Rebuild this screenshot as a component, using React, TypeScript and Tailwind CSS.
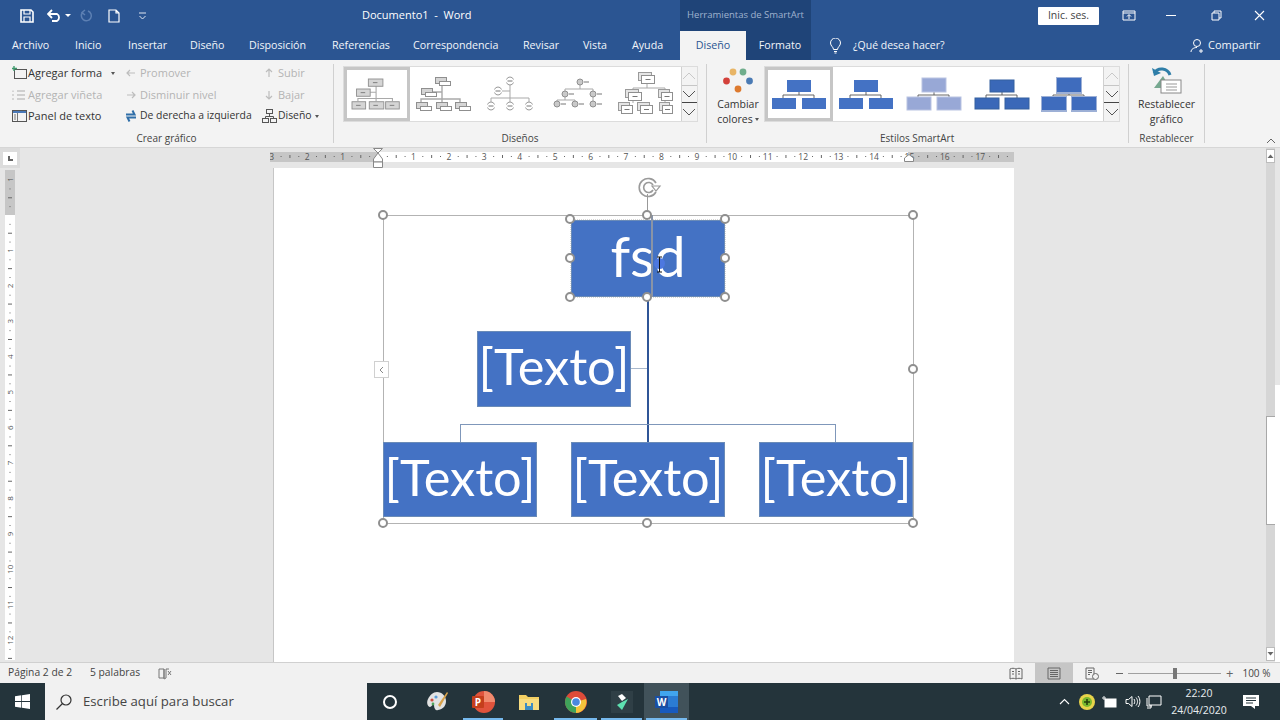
import React from "react";

const F = "font-['Open_Sans','Noto_Sans',sans-serif]";

function Tab({ w, children, cls = "" }: { w: number; children: React.ReactNode; cls?: string }) {
  return <div style={{ width: w }} className={"h-full flex items-center shrink-0 " + cls}>{children}</div>;
}

function Row({ icon, label, dim, w, caret, gap, small }: { icon: React.ReactNode; label: string; dim?: boolean; w: number; caret?: boolean; gap?: boolean; small?: boolean }) {
  return (
    <div style={{ width: w }} className={"h-[21.5px] flex items-center whitespace-nowrap " + (small ? "text-[10.4px] " : "text-[11px] ") + (dim ? "text-[#b4b4b4]" : "text-[#333]")}>
      <span className="w-[18px] h-[16px] flex items-center justify-center shrink-0">{icon}</span>
      <span>{label}</span>
      {caret && <span className={(gap ? "ml-[9px]" : "ml-[3px]") + " w-0 h-0 border-x-[2.5px] border-x-transparent border-t-[3px] border-t-[#555]"} />}
    </div>
  );
}

const G = "#a9a9a9";
function B({ x, y, w, h, fill = "#d5d5d5", s = "#8f8f8f" }: { x: number; y: number; w: number; h: number; fill?: string; s?: string }) {
  return <rect x={x + 0.5} y={y + 0.5} width={w} height={h} fill={fill} stroke={s} strokeWidth="1" />;
}
function dash(x: number, y: number) {
  return <line x1={x} y1={y} x2={x + 5} y2={y} stroke="#777" strokeWidth="1" />;
}

function L1() {
  return (
    <svg width="66" height="50" viewBox="0 0 66 50">
      <path d="M32 16V33M12 33V30H50V33M25 23H32" stroke={G} strokeWidth="1.2" fill="none" />
      <B x={23} y={8} w={16} h={8} />{dash(28.5, 12.5)}
      <B x={10} y={19} w={15} h={8} />{dash(15, 23.5)}
      <B x={5} y={33} w={15} h={8} />{dash(10, 37.5)}
      <B x={24} y={33} w={16} h={8} />{dash(29, 37.5)}
      <B x={42} y={33} w={15} h={8} />{dash(47, 37.5)}
    </svg>
  );
}
function L2() {
  return (
    <svg width="66" height="50" viewBox="0 0 66 50">
      <path d="M32 14V33M11 33V30H50V33M22 23H32" stroke={G} strokeWidth="1.4" fill="none" />
      {[[25, 8], [11, 19], [6, 33], [26, 33], [45, 33]].map(([x, y], i) => (
        <g key={i}>
          <B x={x} y={y} w={11} h={6} />
          <rect x={x + 4.5} y={y + 4.5} width={11} height={4} fill="#fff" stroke="#8f8f8f" />
        </g>
      ))}
    </svg>
  );
}
function Ring({ x, y }: { x: number; y: number }) {
  return <g><path d={`M${x - 3.5} ${y - 1.5}a3.7 3.7 0 0 1 7 0M${x - 3.5} ${y + 1.5}a3.7 3.7 0 0 0 7 0`} fill="none" stroke="#999" strokeWidth="1" />{dash(x - 2.5, y)}</g>;
}
function L3() {
  return (
    <svg width="66" height="50" viewBox="0 0 66 50">
      <path d="M32 16V33M13 33V29H51V33M24 22H32" stroke={G} strokeWidth="1" fill="none" />
      <Ring x={32} y={12} /><Ring x={20} y={22} /><Ring x={13} y={37} /><Ring x={32} y={37} /><Ring x={51} y={37} />
    </svg>
  );
}
function Dot({ x, y }: { x: number; y: number }) {
  return <g><circle cx={x} cy={y} r="3" fill="#c9c9c9" stroke="#8f8f8f" />{dash(x + 4, y)}</g>;
}
function L4() {
  return (
    <svg width="66" height="50" viewBox="0 0 66 50">
      <path d="M34 16V20M19 22V20H47V22M19 28V31H11V32M19 31H29V32M47 28V32" stroke={G} strokeWidth="1" fill="none" />
      <Dot x={34} y={13} /><Dot x={19} y={25} /><Dot x={47} y={25} /><Dot x={11} y={35} /><Dot x={29} y={35} /><Dot x={47} y={35} />
    </svg>
  );
}
function Stack({ x, y, w = 13, h = 8 }: { x: number; y: number; w?: number; h?: number }) {
  return <g>
    <rect x={x - 2.5} y={y - 2.5} width={w} height={h} fill="#e5e5e5" stroke="#9a9a9a" />
    <rect x={x + 0.5} y={y + 0.5} width={w} height={h} fill="#fff" stroke="#8f8f8f" />{dash(x + w / 2 - 2, y + 4.5)}
  </g>;
}
function L5() {
  return (
    <svg width="66" height="50" viewBox="0 0 66 50" className="overflow-visible">
      <path d="M34 15V19M20 21V19H52V21M20 31V34M52 31V34" stroke={G} fill="none" />
      <Stack x={28} y={6} w={13} /><Stack x={15} y={23} w={13} /><Stack x={48} y={23} w={11} />
      <Stack x={8} y={36} w={11} /><Stack x={27} y={36} w={12} /><Stack x={49} y={36} w={10} />
    </svg>
  );
}

function Thumb({ kind }: { kind: number }) {
  const fills = ["#4472c4", "#4472c4", "#98a8d6", "#3a68b8", "#3f6cbd"];
  const f = fills[kind];
  const shadow = kind === 4;
  const st = kind === 2 ? "#b9c3e2" : kind === 3 ? "#34619f" : "none";
  const r = (x: number, y: number, w: number, h: number) => (
    <g>
      {shadow && <rect x={x - 1} y={y - 1} width={w + 2} height={h + 3} fill="#9db0d6" />}
      <rect x={x} y={y} width={w} height={h} fill={f} stroke={st} />
    </g>
  );
  const tall = kind === 2 || kind === 4;
  return (
    <svg width="60" height="44" viewBox="0 0 60 44">
      <path d="M30 20V23M14 26V23H45V26" stroke="#555" strokeWidth="0.9" fill="none" />
      {r(18, tall ? 6 : 8, 24, tall ? 14 : 12)}
      {r(3, tall ? 25 : 26, 24, tall ? 13 : 11)}
      {r(33, tall ? 25 : 26, 24, tall ? 13 : 11)}
    </svg>
  );
}

function Chev({ d }: { d: "u" | "d" }) {
  return (
    <svg width="14" height="8" viewBox="0 0 14 8">
      <path d={d === "u" ? "M1 7L7 1L13 7" : "M1 1L7 7L13 1"} stroke={d === "u" ? "#c8c8c8" : "#555"} fill="none" />
    </svg>
  );
}

function Gallery({ w, children }: { w: number; children: React.ReactNode }) {
  return (
    <div style={{ width: w }} className="h-[56px] border border-[#dcdcdc] bg-white flex shrink-0">
      <div className="flex-1 flex min-w-0">{children}</div>
      <div className="w-[16px] border-l border-[#d0d0d0] bg-[#f3f3f3] flex flex-col shrink-0">
        <div className="h-[19px] flex items-center justify-center border-b border-[#c6c6c6]"><Chev d="u" /></div>
        <div className="h-[17px] flex items-center justify-center border-b border-[#444]"><Chev d="d" /></div>
        <div className="flex-1 flex items-center justify-center"><Chev d="d" /></div>
      </div>
    </div>
  );
}
function Cell({ w, sel, children }: { w: number; sel?: boolean; children: React.ReactNode }) {
  return <div style={{ width: w }} className={"h-full flex items-center justify-center shrink-0 " + (sel ? "border-[3px] border-[#c6c6c6]" : "")}>{children}</div>;
}

function Handle({ x, y }: { x: number; y: number }) {
  return <div style={{ left: x - 5 - 274, top: y - 5 - 168 }} className="absolute w-[10px] h-[10px] rounded-full bg-white border-2 border-[#8f8f8f]" />;
}
function SBox({ x, y, w, h, text, big }: { x: number; y: number; w: number; h: number; text: string; big?: boolean }) {
  return (
    <div style={{ left: x - 274, top: y - 168, width: w, height: h }} className={"absolute bg-[#4472c4] border border-[#6a8bb8] flex items-center justify-center text-white leading-none font-['Lato',sans-serif] " + (big ? "text-[56px] pb-[6px]" : "text-[50.5px] pb-[5px]")}>
      {text}
    </div>
  );
}

function HRuler() {
  const nums: React.ReactNode[] = [];
  const tick = 35.43;
  for (let i = -3; i <= 18; i++) {
    const x = 108 + i * tick;
    if (i !== 0 && i !== 18) nums.push(<text key={i} x={x} y={8} fontSize="8.5" textAnchor="middle" fill="#555" fontFamily="Open Sans">{Math.abs(i)}</text>);
    [0.25, 0.75].forEach((k, j) => nums.push(<rect key={`d${i}${j}`} x={x + k * tick} y={4} width="1" height="1" fill="#666" />));
    nums.push(<rect key={`m${i}`} x={x + 0.5 * tick} y={3} width="1" height="3" fill="#666" />);
  }
  return (
    <svg width="744" height="10" viewBox="0 0 744 10">
      <rect width="108" height="10" fill="#c6c6c6" />
      <rect x="108" width="530" height="10" fill="#fff" />
      <rect x="638" width="106" height="10" fill="#c6c6c6" />
      {nums}
    </svg>
  );
}
function VRuler() {
  const nums: React.ReactNode[] = [];
  const tick = 35.43;
  for (let i = -1; i <= 13; i++) {
    const y = 45 + i * tick;
    if (i !== 0 && i !== 13) nums.push(<text key={i} x={5} y={y} fontSize="8" textAnchor="middle" fill="#555" fontFamily="Open Sans" transform={`rotate(-90 5 ${y}) translate(0 3)`}>{Math.abs(i)}</text>);
    [0.25, 0.75].forEach((k, j) => nums.push(<rect key={`d${i}${j}`} x={4.5} y={y + k * tick} width="1" height="1" fill="#666" />));
    nums.push(<rect key={`m${i}`} x={3} y={y + 0.5 * tick} width="4" height="1" fill="#666" />);
  }
  return (
    <svg width="10" height="490" viewBox="0 0 10 490" className="mt-[2px]">
      <rect width="10" height="45" fill="#c6c6c6" />
      <rect y="45" width="10" height="445" fill="#fff" />
      {nums}
    </svg>
  );
}

function TI({ w, active, under, children }: { w: number; active?: boolean; under?: boolean; children: React.ReactNode }) {
  return (
    <div style={{ width: w }} className={"h-full relative flex items-center justify-center shrink-0 " + (active ? "bg-[#41525a]" : "")}>
      {children}
      {under && <div className="absolute bottom-0 left-[2px] right-[2px] h-[2px] bg-[#76b9ed]" />}
    </div>
  );
}

const GroupLabel = "h-[17px] -mb-[4px] text-[10px] leading-[17px] text-[#444]";

export default function App() {
  return (
    <div className={"w-[1280px] h-[720px] overflow-hidden flex flex-col bg-[#e6e6e6] " + F}>
      {/* Title bar */}
      <div className="h-[31px] bg-[#2b5592] flex items-center text-white shrink-0 relative">
        <div className="w-[362px] flex items-center shrink-0">
          <svg className="ml-[20px]" width="14" height="14" viewBox="0 0 14 14" fill="none" stroke="#fff" strokeWidth="1.6"><path d="M1 1H11L13 3V13H1Z" /><path d="M4 1V5H10V1M4 13V8H10V13" strokeWidth="1.2" /></svg>
          <svg className="ml-[13px]" width="16" height="14" viewBox="0 0 16 14" fill="none" stroke="#fff" strokeWidth="1.8"><path d="M1 5H10A4 4 0 0 1 10 12H5M5 1L1 5L5 9" /></svg>
          <span className="ml-[2px] w-0 h-0 border-x-[3px] border-x-transparent border-t-[3px] border-t-white" />
          <svg className="ml-[8px]" width="14" height="14" viewBox="0 0 14 14" fill="none" stroke="#5d80b3" strokeWidth="1.5"><path d="M4 3A5 5 0 1 0 9 2M6 1L3 3.5L6 6" /></svg>
          <svg className="ml-[15px]" width="12" height="14" viewBox="0 0 12 14" fill="none" stroke="#fff" strokeWidth="1.2"><path d="M1 1H8L11 4V13H1ZM8 1V4H11" /></svg>
          <svg className="ml-[18px]" width="9" height="8" viewBox="0 0 9 8" fill="none" stroke="#dfe6f0" strokeWidth="1"><path d="M1 1H8M1.5 4L4.5 7L7.5 4" /></svg>
        </div>
        <div className="w-[318px] text-[11px] shrink-0 whitespace-pre">Documento1  -  Word</div>
        <div className="w-[131px] h-full bg-[#1f4478] text-[#9fb3cf] text-[9.5px] flex items-center justify-center shrink-0 whitespace-nowrap">Herramientas de SmartArt</div>
        <div className="ml-[227px] w-[61px] h-[18px] bg-white rounded-[1px] text-[#444] text-[10.5px] flex items-center justify-center shrink-0">Inic. ses.</div>
        <svg className="ml-[23px]" width="14" height="11" viewBox="0 0 14 11" fill="none" stroke="#fff"><path d="M1 1H13V10H1ZM1 3H13M7 9V5M5 6.5L7 4.5L9 6.5" /></svg>
        <div className="ml-[30px] w-[10px] h-px bg-white" />
        <svg className="ml-[35px]" width="11" height="11" viewBox="0 0 11 11" fill="none" stroke="#fff"><path d="M1 3H8V10H1ZM3 3V1H10V8H8" /></svg>
        <svg className="ml-[32px]" width="11" height="11" viewBox="0 0 11 11" fill="none" stroke="#fff" strokeWidth="1.1"><path d="M1 1L10 10M10 1L1 10" /></svg>
      </div>

      {/* Tabs */}
      <div className="h-[29px] bg-[#2b5592] flex items-center text-[#f2f5fa] text-[10.7px] shrink-0">
        <Tab w={75} cls="pl-[12px]">Archivo</Tab>
        <Tab w={53}>Inicio</Tab>
        <Tab w={62}>Insertar</Tab>
        <Tab w={59}>Diseño</Tab>
        <Tab w={83}>Disposición</Tab>
        <Tab w={81}>Referencias</Tab>
        <Tab w={110}>Correspondencia</Tab>
        <Tab w={60}>Revisar</Tab>
        <Tab w={49}>Vista</Tab>
        <Tab w={48}>Ayuda</Tab>
        <Tab w={66} cls="bg-[#f3f3f3] text-[#2b5592] justify-center">Diseño</Tab>
        <Tab w={65} cls="bg-[#1f4478] justify-center pl-[3px]">Formato</Tab>
        <svg className="ml-[18px]" width="13" height="16" viewBox="0 0 13 16" fill="none" stroke="#fff"><path d="M4.5 11.5C4.5 9 1.5 8 1.5 5A5 5 0 0 1 11.5 5C11.5 8 8.5 9 8.5 11.5ZM5 13.5H8M5.5 15H7.5" /></svg>
        <span className="ml-[11px] text-[10.5px] w-[337px]">¿Qué desea hacer?</span>
        <svg width="16" height="16" viewBox="0 0 16 16" fill="none" stroke="#fff" strokeWidth="1"><circle cx="7" cy="5" r="3.5" /><path d="M1 14C1 11 4 9.5 7 9.5M11 11V15M9 13H13" /></svg>
        <span className="ml-[2px] text-[11px]">Compartir</span>
      </div>

      {/* Ribbon */}
      <div className="h-[88px] bg-[#f3f3f3] border-b border-[#d6d6d6] flex shrink-0 text-[#444]">
        {/* Crear gráfico */}
        <div className="w-[334px] shrink-0 flex flex-col items-stretch border-r border-[#d0d0d0] my-[4px]">
          <div className="flex pl-[10px] flex-1 min-h-0">
            <div className="flex flex-col w-[112px] -mt-[1.5px]">
              <Row w={112} label="Agregar forma" caret gap icon={<svg width="16" height="14" viewBox="0 0 16 14" fill="none"><rect x="3.5" y="3.5" width="12" height="9" stroke="#555" /><path d="M3 0V5M1 2.5H6" stroke="#3f9a6d" strokeWidth="1.4" /></svg>} />
              <Row w={112} dim label="Agregar viñeta" icon={<svg width="14" height="12" viewBox="0 0 14 12" fill="none" stroke="#c4c4c4" strokeWidth="1.3"><path d="M5 2H13M5 6H13M5 10H13M1 1.5V3M1 5V7M1 9V11" /></svg>} />
              <Row w={112} label="Panel de texto" icon={<svg width="15" height="12" viewBox="0 0 15 12" fill="none"><rect x=".5" y=".5" width="14" height="11" stroke="#555" /><rect x="1" y="1" width="13" height="2" fill="#4a79b8" /><path d="M5.5 3V11M2 5H4M2 7H4M2 9H4" stroke="#777" /></svg>} />
            </div>
            <div className="flex flex-col w-[138px] -mt-[1.5px]">
              <Row w={138} dim label="Promover" icon={<svg width="10" height="8" viewBox="0 0 10 8" fill="none" stroke="#bdbdbd" strokeWidth="1.2"><path d="M9 4H1M4 1L1 4L4 7" /></svg>} />
              <Row w={138} dim label="Disminuir nivel" icon={<svg width="10" height="8" viewBox="0 0 10 8" fill="none" stroke="#bdbdbd" strokeWidth="1.2"><path d="M1 4H9M6 1L9 4L6 7" /></svg>} />
              <Row w={138} small label="De derecha a izquierda" icon={<svg width="14" height="14" viewBox="0 0 14 14" fill="none" stroke="#2f6ea8" strokeWidth="2"><path d="M2 5.5H10.5L8.5 1.5M12 8.5H3.5L5.5 12.5" /></svg>} />
            </div>
            <div className="flex flex-col w-[68px] -mt-[1.5px]">
              <Row w={68} dim label="Subir" icon={<svg width="8" height="10" viewBox="0 0 8 10" fill="none" stroke="#bdbdbd" strokeWidth="1.2"><path d="M4 9V1M1 4L4 1L7 4" /></svg>} />
              <Row w={68} dim label="Bajar" icon={<svg width="8" height="10" viewBox="0 0 8 10" fill="none" stroke="#bdbdbd" strokeWidth="1.2"><path d="M4 1V9M1 6L4 9L7 6" /></svg>} />
              <Row w={68} small label="Diseño" caret icon={<svg width="15" height="14" viewBox="0 0 15 14" fill="none" stroke="#555"><rect x="4.5" y=".5" width="6" height="4" /><rect x=".5" y="9.5" width="6" height="4" /><rect x="8.5" y="9.5" width="6" height="4" /><path d="M7.5 5V7.5M3.5 9.5V7.5H11.5V9.5" /></svg>} />
            </div>
          </div>
          <div className={GroupLabel + " text-center"}>Crear gráfico</div>
        </div>
        {/* Diseños */}
        <div className="w-[373px] shrink-0 flex flex-col items-center border-r border-[#d0d0d0] my-[4px]">
          <div className="flex-1 pt-[2px]">
            <Gallery w={355}>
              <Cell w={66} sel><L1 /></Cell>
              <Cell w={66}><L2 /></Cell>
              <Cell w={70}><L3 /></Cell>
              <Cell w={66}><L4 /></Cell>
              <Cell w={69}><L5 /></Cell>
            </Gallery>
          </div>
          <div className={GroupLabel}>Diseños</div>
        </div>
        {/* Estilos */}
        <div className="w-[422px] shrink-0 flex flex-col border-r border-[#d0d0d0] my-[4px]">
          <div className="flex-1 flex pt-[2px]">
            <div className="w-[57px] shrink-0 flex flex-col items-center pl-[5px]">
              <svg width="30" height="28" viewBox="0 0 30 28" className="mt-[1px]">
                <circle cx="10" cy="5" r="3.4" fill="#e8b566" /><circle cx="20" cy="5" r="3.4" fill="#70ad8c" />
                <circle cx="3.5" cy="14" r="3.4" fill="#d3413a" /><circle cx="26.5" cy="14" r="3.4" fill="#4a7ab4" /><circle cx="15" cy="22" r="3.4" fill="#dd7a2f" />
              </svg>
              <div className="text-[10.5px] leading-[15px] text-center mt-[2px] text-[#333]">Cambiar</div>
              <div className="text-[10.5px] leading-[15px] text-center flex items-center text-[#333]">colores<span className="ml-[2px] w-0 h-0 border-x-[2.5px] border-x-transparent border-t-[3px] border-t-[#555]" /></div>
            </div>
            <Gallery w={356}>
              {[0, 1, 2, 3, 4].map((k) => (
                <Cell key={k} w={67.6} sel={k === 0}><Thumb kind={k} /></Cell>
              ))}
            </Gallery>
          </div>
          <div className={GroupLabel + " pl-[173px]"}>Estilos SmartArt</div>
        </div>
        {/* Restablecer */}
        <div className="w-[76px] shrink-0 flex flex-col items-center border-r border-[#d0d0d0] my-[4px]">
          <div className="flex-1 flex flex-col items-center pt-[2px]">
            <svg width="32" height="28" viewBox="0 0 32 28" fill="none">
              <path d="M3 7A9 9 0 0 1 19 9" stroke="#2f7ea8" strokeWidth="3" /><path d="M1 2L3 10L10 7Z" fill="#2f7ea8" />
              <path d="M3 22L12 10L19 22Z" fill="#76a890" />
              <rect x="10" y="14" width="20" height="13" fill="#fff" stroke="#888" />
              <path d="M15 18H26M15 21H26M15 24H26" stroke="#999" />
            </svg>
            <div className="text-[10.5px] leading-[15px] mt-[3px] text-[#333]">Restablecer</div>
            <div className="text-[10.5px] leading-[15px] text-[#333]">gráfico</div>
          </div>
          <div className={GroupLabel}>Restablecer</div>
        </div>
        <div className="flex-1 flex items-end justify-end pr-[2px] pb-[3px]">
          <svg width="12" height="6" viewBox="0 0 12 6" fill="none" stroke="#666"><path d="M1 5L5 1L9 5" /></svg>
        </div>
      </div>

      {/* Main */}
      <div className="flex-1 min-h-0 flex bg-[#e6e6e6]">
        {/* Left rulers */}
        <div className="w-[270px] shrink-0 flex flex-col">
          <div className="w-[20px] h-[20px] flex items-center justify-center bg-[#dcdcdc]">
            <div className="w-[14px] h-[13px] bg-white flex items-center justify-center">
              <div className="w-[5px] h-[5px] border-l-2 border-b-2 border-[#666]" />
            </div>
          </div>
          <div className="pl-[5px]"><VRuler /></div>
        </div>
        <div className="w-[744px] shrink-0 flex flex-col">
          <div className="h-[20px] pt-[4px] relative">
            <HRuler />
            <svg className="absolute left-[103px] top-0" width="10" height="20" viewBox="0 0 10 20" fill="#fff" stroke="#888"><path d="M.5 .5H9.5L5 5L9.5 11V14H.5V11L5 5Z" /><path d="M.5 14H9.5V19.5H.5Z" /></svg>
            <svg className="absolute left-[634px] top-[6px]" width="10" height="8" viewBox="0 0 10 8" fill="#fff" stroke="#888"><path d="M.5 7.5V4L5 .5L9.5 4V7.5Z" /></svg>
          </div>
          {/* Page */}
          <div className="flex-1 ml-[3px] bg-white border-l border-[#c6c6c6] relative">
            <Diagram />
          </div>
        </div>
        <div className="flex-1" />
        {/* Scrollbar */}
        <div className="w-[9px] shrink-0 bg-[#d6d6d6] flex flex-col mb-[1px]">
          <div className="h-[14px] mt-[1px] bg-white border border-[#bcbcbc] flex items-center justify-center"><svg width="7" height="4" viewBox="0 0 7 4"><path d="M.5 4L3.5 .5L6.5 4Z" fill="#666" /></svg></div>
          <div className="mt-[253px] h-[109px] bg-white border-l border-y border-[#a8a8a8]" />
          <div className="flex-1" />
          <div className="h-[14px] bg-white border border-[#bcbcbc] flex items-center justify-center"><svg width="7" height="4" viewBox="0 0 7 4"><path d="M.5 0L3.5 3.5L6.5 0Z" fill="#666" /></svg></div>
        </div>
        <div className="w-[5px] shrink-0 flex flex-col">
          <div className="h-[237px] bg-[#e6e6e6]" />
          <div className="flex-1 bg-white" />
        </div>
      </div>

      {/* Status bar */}
      <div className="h-[21px] bg-[#f1f1f1] border-t border-[#d0d0d0] flex items-center text-[10.3px] text-[#444] shrink-0 whitespace-nowrap">
        <span className="ml-[8px] w-[82px]">Página 2 de 2</span>
        <span className="w-[68px]">5 palabras</span>
        <svg width="14" height="13" viewBox="0 0 14 13" fill="none" stroke="#777"><path d="M1 2H6V11H1ZM6 2V12L8 11V2H11M10 4L13 8M13 4L10 8" /></svg>
        <svg className="ml-[837px]" width="14" height="13" viewBox="0 0 14 13" fill="none" stroke="#666"><path d="M1 2C3 1 5 1 7 2C9 1 11 1 13 2V12C11 11 9 11 7 12C5 11 3 11 1 12ZM7 2V12M3 4.5H5M3 7H5M9 4.5H11M9 7H11" /></svg>
        <div className="ml-[12px] w-[38px] h-full bg-[#c6c6c6] flex items-center justify-center">
          <svg width="14" height="13" viewBox="0 0 14 13" fill="none" stroke="#666"><path d="M1 1H13V12H1ZM3 3.5H11M3 5.5H11M3 7.5H11M3 9.5H11" /></svg>
        </div>
        <svg className="ml-[12px]" width="14" height="13" viewBox="0 0 14 13" fill="none" stroke="#666"><path d="M1 1H9V12H1ZM3 3.5H7M3 5.5H7M3 7.5H5" /><circle cx="10.5" cy="9.5" r="3" fill="#f1f1f1" /></svg>
        <div className="ml-[17px] w-[7px] h-px bg-[#666]" />
        <div className="ml-[5px] w-[93px] h-px bg-[#a0a0a0] relative">
          <div className="absolute left-[45px] -top-[5px] w-[4px] h-[11px] bg-[#777]" />
        </div>
        <span className="ml-[5px] text-[13px] text-[#666] leading-none">+</span>
        <span className="ml-[9px] text-[10px]">100 %</span>
      </div>

      {/* Taskbar */}
      <div className="h-[37px] bg-[#24343b] flex items-center shrink-0 text-white">
        <div className="w-[45px] h-full flex items-center justify-center shrink-0">
          <svg width="15" height="15" viewBox="0 0 15 15" fill="#fff"><path d="M0 2.2L6.3 1.3V7H0ZM7 1.2L15 0V7H7ZM0 8H6.3V13.7L0 12.8ZM7 8H15V15L7 13.8Z" /></svg>
        </div>
        <div className="w-[322px] h-full bg-[#f1f1f1] flex items-center text-[#444] text-[13.2px] shrink-0">
          <svg className="ml-[10px]" width="18" height="18" viewBox="0 0 18 18" fill="none" stroke="#333" strokeWidth="1.2"><circle cx="11" cy="7" r="5" /><path d="M7.5 10.5L1.5 16.5" /></svg>
          <span className="ml-[10px]">Escribe aquí para buscar</span>
        </div>
        <TI w={46}><div className="w-[14px] h-[14px] rounded-full border-2 border-white" /></TI>
        <TI w={48}>
          <svg width="24" height="24" viewBox="0 0 24 24"><path d="M12 2C8 2 5 5 3 9C1 13 3 17 5 17C7 17 7 14 9 15C9 19 11 21 13 20C19 19 21 15 21 11C21 6 17 2 12 2Z" fill="#e2e2e2" /><circle cx="7" cy="10" r="1.6" fill="#cf4b3e" /><circle cx="11" cy="7" r="1.6" fill="#5a9bd6" /><circle cx="8" cy="14" r="1.4" fill="#4fa35b" /><path d="M22 2L13 15L15 17L23 3Z" fill="#d8a24a" /></svg>
        </TI>
        <TI w={44} under>
          <svg width="26" height="24" viewBox="0 0 26 24"><circle cx="14" cy="12" r="11" fill="#e0533c" /><path d="M14 1A11 11 0 0 1 25 12H14Z" fill="#f08a6e" /><rect x="2" y="6" width="12" height="12" rx="1" fill="#c43e1c" /><text x="8" y="16" fontSize="10" fontWeight="700" fill="#fff" textAnchor="middle" fontFamily="Open Sans">P</text></svg>
        </TI>
        <TI w={47}>
          <svg width="22" height="18" viewBox="0 0 22 18"><path d="M1 2H8L10 4H21V17H1Z" fill="#f2cf63" /><rect x="1" y="6" width="20" height="11" fill="#f7dc80" /><rect x="7" y="10" width="8" height="7" fill="#3c8cc4" /><rect x="9" y="10" width="4" height="3" fill="#f7dc80" /></svg>
        </TI>
        <TI w={47} under>
          <svg width="22" height="22" viewBox="0 0 22 22"><circle cx="11" cy="11" r="11" fill="#dd4b39" /><path d="M11 11L21 8A11 11 0 0 1 11 22Z" fill="#f5c33b" /><path d="M11 11L11 22A11 11 0 0 1 1.5 5.5Z" fill="#3fa35a" /><circle cx="11" cy="11" r="5" fill="#fff" /><circle cx="11" cy="11" r="3.8" fill="#4a88e0" /></svg>
        </TI>
        <TI w={45} under>
          <svg width="22" height="22" viewBox="0 0 22 22"><rect width="22" height="22" fill="#2f3f46" /><path d="M11 11L17 8L11 19L6 14Z" fill="#5de0b0" /><path d="M7 5L11 3L15 7L11 10Z" fill="#fff" /></svg>
        </TI>
        <TI w={45} active under>
          <svg width="24" height="22" viewBox="0 0 24 22"><rect x="5" y="0" width="18" height="22" rx="1" fill="#2b7cd3" /><rect x="5" y="0" width="18" height="5" fill="#41a5ee" /><rect x="5" y="16" width="18" height="6" fill="#185abd" /><rect x="0" y="5" width="13" height="12" fill="#1a4fa3" /><text x="6.5" y="15" fontSize="10" fontWeight="700" fill="#fff" textAnchor="middle" fontFamily="Open Sans">W</text></svg>
        </TI>
        <div className="ml-[368px] w-[14px] flex justify-center shrink-0">
          <svg width="11" height="7" viewBox="0 0 11 7" fill="none" stroke="#fff" strokeWidth="1.1"><path d="M1 6L5.5 1.5L10 6" /></svg>
        </div>
        <svg className="ml-[8px]" width="16" height="16" viewBox="0 0 16 16"><circle cx="8" cy="8" r="8" fill="#e8d44a" /><circle cx="8" cy="8" r="5" fill="#7ab92f" /><path d="M8 5V11M5 8H11" stroke="#26400c" strokeWidth="1.6" /></svg>
        <svg className="ml-[7px]" width="15" height="12" viewBox="0 0 15 12" fill="none" stroke="#fff"><rect x="3" y="3" width="11" height="8" fill="#fff" /><circle cx="2" cy="2" r="1.2" /></svg>
        <svg className="ml-[8px]" width="16" height="13" viewBox="0 0 16 13" fill="none" stroke="#fff"><path d="M1 4.5H3.5L7 1.5V11.5L3.5 8.5H1ZM9 4C10 5.5 10 7.5 9 9M11 2.5C13 5 13 8 11 10.5M13 1C15.5 4 15.5 9 13 12" /></svg>
        <svg className="ml-[5px]" width="16" height="14" viewBox="0 0 16 14" fill="none" stroke="#fff"><path d="M3 1H15V10H3ZM1 3V11H6M5 10V13H1" /></svg>
        <div className="ml-[3px] w-[68px] text-center text-[10.5px] leading-[17px] text-[#e8ecee] shrink-0">
          <div>22:20</div>
          <div>24/04/2020</div>
        </div>
        <svg className="ml-[10px]" width="16" height="16" viewBox="0 0 16 16"><path d="M0 1H16V12H12V15L8 12H0Z" fill="#fff" /><path d="M3 4H13M3 6.5H13M3 9H10" stroke="#24343b" /></svg>
      </div>
    </div>
  );
}

function Diagram() {
  const px = (x: number) => x - 274;
  const py = (y: number) => y - 168;
  return (
    <>
      {/* Frame */}
      <div style={{ left: px(383), top: py(215), width: 531, height: 309 }} className="absolute border border-[#b3b3b3]" />
      {/* Connectors */}
      <div style={{ left: px(647), top: py(297), height: 145 }} className="absolute w-[2px] bg-[#2f5597]" />
      <div style={{ left: px(460), top: py(424), width: 376, height: 18 }} className="absolute border-t border-x border-[#7f97ba]" />
      <div style={{ left: px(631), top: py(368), width: 16 }} className="absolute h-px bg-[#a9b8cc]" />
      <SBox x={571} y={220} w={154} h={77} text="fsd" big />
      <SBox x={477} y={331} w={154} h={76} text="[Texto]" />
      <SBox x={383} y={442} w={154} h={75} text="[Texto]" />
      <SBox x={571} y={442} w={154} h={75} text="[Texto]" />
      <SBox x={759} y={442} w={154} h={75} text="[Texto]" />
      {/* Selected node overlay */}
      <div style={{ left: px(570), top: py(219), width: 156, height: 79 }} className="absolute border border-dotted border-[#d8d8d8]" />
      <div style={{ left: px(651), top: py(215), height: 82 }} className="absolute w-[2px] bg-[#8a94a6]" />
      <div style={{ left: px(647), top: py(194), height: 21 }} className="absolute w-px bg-[#999]" />
      {/* Rotate handle */}
      <svg style={{ left: px(636), top: py(177) }} className="absolute" width="26" height="22" viewBox="0 0 26 22" fill="none" stroke="#9a9a9a">
        <path d="M20 15A9 9 0 1 1 20 6" strokeWidth="1.6" /><path d="M17 13A5 5 0 1 1 17 8" strokeWidth="1.6" /><path d="M16 9L24 9L20 14Z" strokeWidth="1.2" fill="#fff" />
      </svg>
      {/* Text pane toggle */}
      <div style={{ left: px(374), top: py(361) }} className="absolute w-[15px] h-[17px] bg-white border border-[#d0d0d0] flex items-center justify-center">
        <svg width="5" height="8" viewBox="0 0 5 8" fill="none" stroke="#888"><path d="M4 1L1 4L4 7" /></svg>
      </div>
      {/* I-beam */}
      <div style={{ left: px(654), top: py(258) }} className="absolute w-[11px] h-[11px] rounded-full bg-[#4d78e0]" />
      <svg style={{ left: px(656), top: py(256) }} className="absolute" width="7" height="17" viewBox="0 0 7 17" fill="none" stroke="#111"><path d="M1 1H6M3.5 1V16M1 16H6" /></svg>
      {[[383, 215], [647, 215], [913, 215], [913, 369], [383, 523], [647, 523], [913, 523]].map(([x, y], i) => <Handle key={i} x={x} y={y} />)}
      {[[570, 219], [725, 219], [570, 258], [725, 258], [570, 297], [647, 297], [725, 297]].map(([x, y], i) => <Handle key={"n" + i} x={x} y={y} />)}
    </>
  );
}
